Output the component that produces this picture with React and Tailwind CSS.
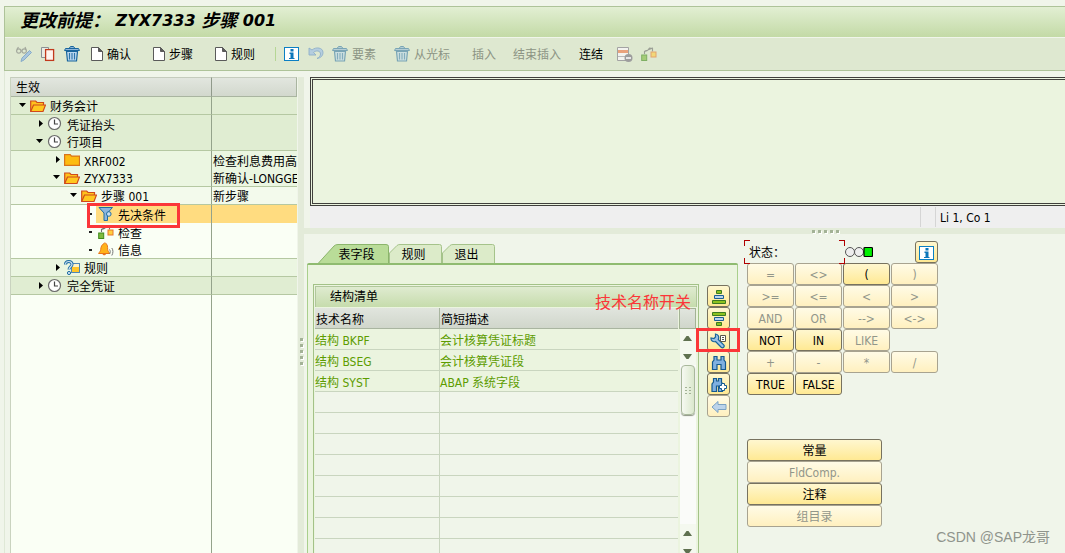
import React from "react";

const Svg = ({ children, className = "w-4 h-4", box = "0 0 16 16" }) => (
  <svg viewBox={box} className={`shrink-0 ${className}`} fill="none" aria-hidden="true">
    {children}
  </svg>
);

const GlassesPencil = () => (
  <Svg>
    <circle cx="2.800" cy="5" r="2.200" stroke="#a3a89d" strokeWidth="1.200" />
    <circle cx="8.200" cy="5" r="2.200" stroke="#a3a89d" strokeWidth="1.200" />
    <path d="M1 3l1.500-2M5 5h1M10 3.500L9 1" stroke="#a3a89d" strokeWidth="1.200" />
    <path d="M13.500 4.500l2 2-7.500 7.500-3 1.500 1-3.500z" fill="#a9c6de" stroke="#86abc8" />
  </Svg>
);
const Copy = () => (
  <Svg>
    <path d="M5 11.500H1.500v-10h7v2" stroke="#8b9094" fill="#e9ece4" />
    <rect x="5.600" y="3.600" width="8" height="10.800" fill="#fff4ee" stroke="#c2391c" strokeWidth="1.300" />
  </Svg>
);
const Trash = ({ dim }) => (
  <Svg>
    <g opacity={dim ? 0.5 : 1}>
      <path d="M5 2.500l1.500-2h3l1.500 2" fill="#8fb6dc" stroke="#19659c" />
      <path d="M.5 4.500l1-2h13l1 2z" fill="#8fb6dc" stroke="#19659c" />
      <path d="M2.500 5.500h11l-1 9.500h-9z" fill="#b9d6ee" stroke="#19659c" strokeWidth="1.200" />
      <path d="M5.500 7v6.500M8 7v6.500M10.500 7v6.500" stroke="#2a73ab" strokeWidth="1.100" />
    </g>
  </Svg>
);
const Doc = () => (
  <Svg className="w-3 h-4" box="0 0 12 16">
    <path d="M.5 1.500h7l4 4v9h-11z" fill="#fff" stroke="#5a5a5a" />
    <path d="M7.500 1.500v4h4z" fill="#5a5a5a" stroke="#5a5a5a" />
  </Svg>
);
const Info = () => (
  <Svg>
    <rect x=".5" y="1.500" width="14" height="13" fill="#fff" stroke="#0b7fc4" />
    <path d="M6.500 3h3v2.500h-3zM5.500 6.500h4V12h1v1H5v-1h1.500V8h-1z" fill="#0b76ba" />
  </Svg>
);
const Undo = () => (
  <Svg>
    <path d="M1 2v7h7L5.500 6.500C8 4 12.500 4.500 12.500 8c0 2-1.500 3.300-3.500 4.500 3.500-.5 6-2.500 6-6 0-5-7-6-11-2.500z" fill="#b4cddf" stroke="#8fb0c8" strokeWidth=".9" />
  </Svg>
);
const ListMinus = () => (
  <Svg className="w-[17px] h-4" box="0 0 17 16">
    <path d="M1.500 1.500h11v13h-11z" fill="#f3f3ef" stroke="#a3a3a3" />
    <path d="M2 4h10v3H2z" fill="#e9a27c" />
    <path d="M2 10.500h10" stroke="#b9b9b9" />
    <circle cx="12.500" cy="12" r="4" fill="#9d9d9d" />
    <path d="M10 12h5" stroke="#fff" strokeWidth="1.500" />
  </Svg>
);
const Flow = ({ dim }) => (
  <Svg>
    <g opacity={dim ? 0.6 : 1}>
      <path d="M3.500 8V5.500l3-1M6.500 4.500l2-2.500 3 .5v3M4 5l8-3" stroke="#6f6f6f" strokeWidth="1.100" />
      <rect x=".7" y="9" width="5" height="5.500" fill="#7fbb3d" stroke="#3f8a1c" />
      <rect x="10" y="6" width="5" height="5" fill="#ffcf3f" stroke="#e8772a" />
    </g>
  </Svg>
);
const FolderOpen = () => (
  <Svg>
    <path d="M.7 13.300V3h5l1.300 1.500h6.500V7" fill="#ffc21c" stroke="#cf4a1c" strokeWidth="1.200" />
    <path d="M.7 13.500L3.500 7h12l-2.500 6.500z" fill="#ffc81f" stroke="#cf4a1c" strokeWidth="1.200" />
  </Svg>
);
const Folder = () => (
  <Svg>
    <path d="M.6 13.400V2.600h5.600l1.300 1.500h8v9.300z" fill="#fdbb10" stroke="#d9731a" strokeWidth="1.200" />
  </Svg>
);
const Clock = () => (
  <Svg>
    <circle cx="7.500" cy="7.500" r="6" fill="#fff" stroke="#6b6b6b" strokeWidth="1.200" />
    <path d="M7.500 3.500v4.500h3.500" stroke="#444" strokeWidth="1.200" />
  </Svg>
);
const Filter = () => (
  <Svg>
    <path d="M1 1.500h13.500L9.500 7v7.500H6V7z" fill="#8db5dd" stroke="#1f6ea3" />
    <circle cx="10.800" cy="8" r="2.300" fill="#c9def2" stroke="#1f6ea3" />
  </Svg>
);
const Bell = () => (
  <Svg>
    <path d="M6 1.500c.4-.7 1.600-.7 1.900 0C9.700 2.500 9.500 4.500 9.700 7.500c.1 1.700 1.300 2.400 2 4H.6c.8-1.600 2-2.300 2.100-4 .2-3 1.300-5 3.300-6z" fill="#ffb21a" stroke="#e8751c" />
    <path d="M4.500 12c.5 1.700 3 1.700 3.500 0z" fill="#e8751c" />
    <path d="M11.500 7.500c1 1.300 1 3 0 4.500M13.800 6c1.500 2 1.500 5 0 7.500" stroke="#777" />
  </Svg>
);
const Rule = () => (
  <Svg>
    <rect x="7.500" y="3.500" width="8" height="9" fill="#ffc62b" stroke="#4f87b5" />
    <path d="M8 4h7v3H8z" fill="#fff3c4" />
    <path d="M1.500 4.500c0-4 6.500-4 6.500 0 0 2.200-3 2.300-3 5" stroke="#1f6ea3" strokeWidth="3" />
    <path d="M1.500 4.500c0-4 6.500-4 6.500 0 0 2.200-3 2.300-3 5" stroke="#cfe2f3" strokeWidth="1.200" />
    <circle cx="5" cy="13" r="1.600" fill="#cfe2f3" stroke="#1f6ea3" />
  </Svg>
);

const SortAsc = () => (
  <Svg>
    <path d="M5.500 1.500h5v3h-5z" fill="#8cc21f" stroke="#3b7a22" />
    <path d="M3.500 6.500h9v3h-9z" fill="#b8d4ef" stroke="#1b5c94" />
    <path d="M1.500 11.500h13v3h-13z" fill="#8cc21f" stroke="#3b7a22" />
  </Svg>
);
const SortDesc = () => (
  <Svg>
    <path d="M1.500 1.500h13v3h-13z" fill="#8cc21f" stroke="#3b7a22" />
    <path d="M3.500 6.500h9v3h-9z" fill="#b8d4ef" stroke="#1b5c94" />
    <path d="M5.500 11.500h5v3h-5z" fill="#8cc21f" stroke="#3b7a22" />
  </Svg>
);
const Wrench = () => (
  <Svg className="h-4 w-[17px]" box="0 0 17 16">
    <path
      d="M5.500 1v3L4 5.500 1 5c-.3 2.800 2 4.300 4.500 3.500l5.700 5.700c1.700 1.500 4-.6 2.500-2.400L8.300 6.500C9.500 3.500 8 1.300 5.500 1z"
      fill="#9cc2e5"
      stroke="#19659c"
      strokeWidth="1.200"
    />
    <path d="M10.500 2.500h5v6h-5z" fill="#fff" stroke="#5a564a" />
    <path d="M12 4.500h2M12 6.500h2" stroke="#5a564a" />
  </Svg>
);
const Binoculars = ({ plus }) => (
  <Svg>
    <path
      d={
        plus
          ? "M1 14.500V7l1.500-2V1.500h3V4h2V1.500h3V5l1 2v7.500h-4V9h-2v5.500z"
          : "M1.500 14.500V7L3 5V1.500h3V5h4V1.500h3V5l1.500 2v7.500h-4.500V9.500h-4v5z"
      }
      fill="#7fb0e0"
      stroke="#14598f"
      strokeWidth="1.200"
    />
    {plus && <path d="M10.500 6.500h3v2h2v3h-2v2h-3v-2h-2v-3h2z" fill="#fff" stroke="#14598f" />}
  </Svg>
);
const ArrowLeft = () => (
  <Svg>
    <path d="M1 8l6-5.500v3h8v5H7v3z" fill="#bcd3ea" stroke="#7ba2c4" />
  </Svg>
);

const tools = [
  { label: "显示/更改", icon: <GlassesPencil />, hide: true, off: true },
  { label: "复制", icon: <Copy />, hide: true },
  { label: "删除", icon: <Trash />, hide: true, cls: "mr-[3px]" },
  { label: "确认", icon: <Doc />, cls: "w-[54px]" },
  { label: "步骤", icon: <Doc />, cls: "w-[54px]" },
  { label: "规则", icon: <Doc />, cls: "w-[52px]" },
  { sep: true },
  { label: "信息", icon: <Info />, hide: true },
  { label: "撤销", icon: <Undo />, hide: true, off: true },
  { label: "要素", icon: <Trash dim />, off: true, cls: "w-[54px]" },
  { label: "从光标", icon: <Trash dim />, off: true, cls: "w-[70px]" },
  { label: "插入", off: true, cls: "w-[33px]" },
  { label: "结束插入", off: true, cls: "w-[58px]" },
  { label: "连结", cls: "w-[29px]" },
  { label: "删除行", icon: <ListMinus />, hide: true, off: true },
  { label: "结构", icon: <Flow dim />, hide: true, off: true },
];

const indent = ["pl-[7px]", "pl-[24px]", "pl-[41px]", "pl-[58px]", "pl-[75px]"];

const tree = [
  { lv: 0, open: true, icon: <FolderOpen />, text: "财务会计", bg: "bg-[#e0edd2]", line: true },
  { lv: 1, open: false, icon: <Clock />, text: "凭证抬头", bg: "bg-[#e0edd2]" },
  { lv: 1, open: true, icon: <Clock />, text: "行项目", bg: "bg-[#e0edd2]", line: true },
  { lv: 2, open: false, icon: <Folder />, text: "XRF002", note: "检查利息费用高", bg: "bg-[#ebf6e1]" },
  { lv: 2, open: true, icon: <FolderOpen />, text: "ZYX7333", note: "新确认-LONGGE", bg: "bg-[#ebf6e1]", line: true },
  { lv: 3, open: true, icon: <FolderOpen />, text: "步骤 001", note: "新步骤", bg: "bg-[#f3faec]", line: true },
  { lv: 4, icon: <Filter />, text: "先决条件", bg: "bg-[#fafff5]", sel: true },
  { lv: 4, icon: <Flow />, text: "检查", bg: "bg-[#fafff5]" },
  { lv: 4, icon: <Bell />, text: "信息", bg: "bg-[#fafff5]", line: true },
  { lv: 2, open: false, icon: <Rule />, text: "规则", bg: "bg-[#ebf6e1]", line: true },
  { lv: 1, open: false, icon: <Clock />, text: "完全凭证", bg: "bg-[#e0edd2]", line: true },
];

const Twisty = ({ open }) => (
  <Svg className="w-3 h-3" box="0 0 12 12">
    {open === undefined && <path d="M3 5h3v2H3z" fill="#222" />}
    {open === true && <path d="M1 3h7L4.500 7z" fill="#000" />}
    {open === false && <path d="M4 2v7l4-3.500z" fill="#000" />}
  </Svg>
);

function Tree() {
  return (
    <section className="flex w-[287px] shrink-0 flex-col border-l border-[#c9d3bf] bg-[#fafff5]">
      <table className="w-full table-fixed border-separate border-spacing-0 text-left">
        <colgroup>
          <col className="w-[201px]" />
          <col />
        </colgroup>
        <thead>
          <tr className="h-5">
            <th className="border-y border-r border-t-[#c5ccbd] border-r-[#909a8b] border-b-[#a9b5a0] bg-gradient-to-b from-[#e2e6df] to-[#d2d8cd] p-0 pl-[5px] pt-0.5 font-normal leading-4">
              生效
            </th>
            <th className="border-y border-r border-t-[#c5ccbd] border-r-[#a9b5a0] border-b-[#a9b5a0] bg-gradient-to-b from-[#e2e6df] to-[#d2d8cd] p-0" />
          </tr>
        </thead>
        <tbody>
          {tree.map((r) => (
            <tr key={r.text} className={r.bg}>
              <td className={`relative border-r border-[#94a38b] p-0 ${r.line ? "border-b border-b-[#b5c8a2]" : ""}`}>
                <div className={`flex items-center ${r.line ? "h-[17px]" : "h-[18px]"} ${indent[r.lv]}`}>
                  <Twisty open={r.open} />
                  <div className={`-ml-0.5 flex h-full flex-1 items-center gap-1 pl-0.5 ${r.sel ? "bg-[#ffdc80]" : ""}`}>
                    {r.icon}
                    <span className="whitespace-nowrap pt-[3px] leading-[14px]">{r.text}</span>
                  </div>
                </div>
                {r.sel && (
                  <div className="absolute -top-0.5 left-[76px] z-10 h-[25px] w-[93px] border-[3px] border-[#fb3639]" />
                )}
              </td>
              <td
                className={`overflow-hidden whitespace-nowrap p-0 pl-px ${r.sel ? "bg-[#ffdc80]" : ""} ${
                  r.line ? "border-b border-b-[#b5c8a2]" : ""
                }`}
              >
                <div className="pt-[3px] leading-[14px]">{r.note}</div>
              </td>
            </tr>
          ))}
        </tbody>
      </table>
      <div className="w-[201px] flex-1 border-r border-[#94a38b]" />
    </section>
  );
}

const Grip = ({ vertical }) => (
  <div className={`flex gap-[3px] ${vertical ? "flex-col" : ""}`}>
    {[0, 1, 2, 3, 4].map((i) => (
      <i key={i} className="h-[3px] w-[3px] bg-[#a3b296] shadow-[1px_1px_0_#fff]" />
    ))}
  </div>
);

const Tab = ({ active, wide, children }) => (
  <button
    role="tab"
    aria-selected={!!active}
    className={`relative h-[19px] text-center ${wide ? "w-[71px] pl-1.5" : "w-[53px] pr-1"}`}
  >
    <svg
      className="absolute inset-0 h-full w-full"
      viewBox={wide ? "0 0 71 19" : "0 0 53 19"}
      fill={active ? "#b9dc98" : "#dcebc9"}
      stroke={active ? "#8bb56b" : "#a5c38a"}
      aria-hidden="true"
    >
      {wide ? <path d="M.5 19L16 2q1.500-1.500 4-1.500h48q2.500 0 2.500 2V19" /> : <path d="M.5 19V9L8 1.500Q9 .5 11 .5h39.500q2 0 2 2V19" />}
    </svg>
    <span className="relative block leading-[22px]">{children}</span>
  </button>
);

const fields = [
  ["结构 BKPF", "会计核算凭证标题"],
  ["结构 BSEG", "会计核算凭证段"],
  ["结构 SYST", "ABAP 系统字段"],
  ...Array.from({ length: 8 }, () => ["", ""]),
];

const ScrollArrow = ({ up }) => (
  <button aria-label={up ? "向上" : "向下"} className="flex h-[18px] w-4 shrink-0 items-center justify-center bg-[#f4f8ef]">
    <Svg className="h-[5px] w-[9px]" box="0 0 9 5">
      <path d={up ? "M0 5h9L5.500 0h-2z" : "M0 0h9L5.500 5h-2z"} fill="#5f7050" />
    </Svg>
  </button>
);

function FieldTable() {
  return (
    <div className="min-w-0 flex-1 border-l border-t border-r border-[#a3c287] pl-px pt-px pr-px">
      <div className="relative mb-px flex h-[21px] items-center border border-b-0 border-[#b1c79c] bg-gradient-to-b from-[#dfebd0] to-[#c6dcac] pl-3.5">
        结构清单
        <span className="absolute right-[5px] top-1.5 z-10 text-base leading-5 text-[#fb3639]">技术名称开关</span>
      </div>
      <div className="flex">
        <table className="min-w-0 flex-1 table-fixed border-separate border-spacing-0 text-left">
          <colgroup>
            <col className="w-[125px]" />
            <col />
          </colgroup>
          <thead>
            <tr>
              {["技术名称", "简短描述"].map((h, i) => (
                <th
                  key={h}
                  className={`h-[21px] border-b border-[#a9b5a0] bg-gradient-to-b from-[#e1e5de] to-[#d0d6cb] p-0 pl-px pt-1 font-normal leading-4 ${
                    i === 0 ? "border-r" : ""
                  }`}
                >
                  {h}
                </th>
              ))}
            </tr>
          </thead>
          <tbody className="text-[#5d9c00]">
            {fields.map((f, r) => (
              <tr key={r} className={f[0] ? "bg-[#ebf4df]" : "bg-[#f0f5ea]"}>
                <td className="h-[21px] border-b border-r border-[#c9d5bf] p-0 pt-1 leading-4">{f[0]}</td>
                <td className="h-[21px] border-b border-[#c9d5bf] p-0 pt-1 leading-4">{f[1]}</td>
              </tr>
            ))}
          </tbody>
        </table>
        <div className="flex w-[19px] flex-col items-center">
          <div className="h-[21px] w-[17px] shrink-0 border border-[#a3b394] bg-gradient-to-b from-[#e1e5de] to-[#d0d6cb]" />
          <ScrollArrow up />
          <ScrollArrow />
          <div className="flex w-4 flex-1 flex-col bg-[#fafbf9]">
            <div className="mx-px flex h-[50px] items-center justify-center gap-0.5 rounded-sm border border-[#a9b89c] bg-gradient-to-r from-[#f6f9f2] to-[#dbe8cd] shadow-[0_1px_1px_#8c9484]">
              {[0, 1].map((c) => (
                <span key={c} className="flex flex-col gap-0.5">
                  {[0, 1, 2].map((i) => (
                    <i key={i} className="h-px w-0.5 bg-[#a3b296]" />
                  ))}
                </span>
              ))}
            </div>
          </div>
          <ScrollArrow up />
          <ScrollArrow />
        </div>
      </div>
    </div>
  );
}

const Key = ({ off, className = "", children, ...rest }) => (
  <button
    disabled={off}
    className={`flex h-[22px] items-center justify-center rounded-[3px] border pt-px ${
      off
        ? "border-[#a8a390] bg-gradient-to-b from-[#fffbe6] to-[#fff0bf] text-[#92968a]"
        : "border-[#77725f] bg-gradient-to-b from-[#fff7cf] to-[#ffe993] text-black"
    } ${className}`}
    {...rest}
  >
    {children}
  </button>
);

const sideTools = [
  ["升序排序", <SortAsc />],
  ["降序排序", <SortDesc />],
  ["技术名称开关", <Wrench />],
  ["查找", <Binoculars />],
  ["继续查找", <Binoculars plus />],
  ["返回", <ArrowLeft />],
];

const keys = [
  ["=", 1], ["<>", 1], ["(", 0], [")", 1],
  [">=", 1], ["<=", 1], ["<", 1], [">", 1],
  ["AND", 1], ["OR", 1], ["-->", 1], ["<->", 1],
  ["NOT", 0], ["IN", 0], ["LIKE", 1], null,
  ["+", 1], ["-", 1], ["*", 1], ["/", 1],
  ["TRUE", 0], ["FALSE", 0],
];

function Keypad() {
  return (
    <section className="flex flex-col gap-11 pl-[9px] pt-[7px]">
      <div className="grid grid-cols-[repeat(4,47px)] gap-x-px">
        <div className="relative col-span-2 flex h-[22px] items-center pl-0.5 pt-0.5">
          状态：
          <i className="absolute -left-[3px] -top-px h-1.5 w-1.5 border-l border-t border-[#b00000]" />
          <i className="absolute -right-[3px] -top-px h-1.5 w-1.5 border-r border-t border-[#b00000]" />
          <i className="absolute -bottom-px -left-[3px] h-1.5 w-1.5 border-b border-l border-[#b00000]" />
          <i className="absolute -bottom-px -right-[3px] h-1.5 w-1.5 border-b border-r border-[#b00000]" />
        </div>
        <div className="flex items-center pl-0.5">
          <Svg className="w-7 h-3" box="0 0 28 12">
            <circle cx="5" cy="6" r="4.500" fill="#eee" stroke="#555" />
            <circle cx="14" cy="6" r="4.500" fill="#eee" stroke="#555" />
            <rect x="19" y="1.500" width="8.500" height="9" rx="1" fill="#00f000" stroke="#000" strokeWidth="1.200" />
          </Svg>
        </div>
        <Key className="w-[23px] justify-self-end" aria-label="信息">
          <Info />
        </Key>
        {keys.map((k, i) =>
          k ? (
            <Key key={i} off={!!k[1]}>
              {k[0]}
            </Key>
          ) : (
            <span key={i} />
          )
        )}
      </div>
      <div className="flex w-[135px] flex-col">
        <Key>常量</Key>
        <Key off>FldComp.</Key>
        <Key>注释</Key>
        <Key off>组目录</Key>
      </div>
    </section>
  );
}

export default function App() {
  return (
    <div className="relative flex h-screen flex-col overflow-hidden bg-[#f0f5ea] pl-1 font-['DejaVu_Sans_Condensed','Noto_Sans','Noto_Sans_CJK_SC',sans-serif] text-xs text-black">
      <header className="mt-1.5 shrink-0 border-l border-t border-[#aec399]">
        <h1 className="flex h-[31px] items-center whitespace-pre border-b border-[#f0f5ea] bg-gradient-to-b from-[#e2efd3] to-[#c3daa6] pb-0.5 pl-[15px] font-['DejaVu_Sans','Noto_Sans_CJK_SC',sans-serif] text-base font-bold italic leading-6">
          <span className="text-lg leading-6">更改前提：</span>
          {" ZYX7333 "}
          <span className="text-lg leading-6">步骤</span>
          {" 001"}
        </h1>
        <nav className="flex h-[33px] items-center gap-2 border-b border-[#aec399] bg-[#dee8d0] pl-[11px]">
          {tools.map((t, i) =>
            t.sep ? (
              <i key={i} className="h-3.5 w-px border-l border-[#b5d694]" />
            ) : (
              <button
                key={i}
                disabled={t.off}
                aria-label={t.label}
                className={`flex h-6 shrink-0 items-center gap-1 whitespace-nowrap disabled:text-[#8c9484] ${t.cls || ""}`}
              >
                {t.icon}
                {!t.hide && <span className="pt-0.5">{t.label}</span>}
              </button>
            )
          )}
        </nav>
      </header>
      <main className="flex min-h-0 flex-1 border-l border-[#dfe8d6] pl-[5px] pt-1.5">
        <Tree />
        <div className="ml-px flex w-1.5 shrink-0 flex-col items-center justify-center bg-[#e3ebd9] pt-[72px]">
          <Grip vertical />
        </div>
        <div className="flex min-w-0 flex-1 flex-col">
          <div className="ml-1.5 shrink-0">
            <textarea
              aria-label="条件编辑器"
              className="block h-[129px] w-full resize-none border-[3px] border-r-0 border-double border-[#40403c] bg-[#ebf4df] outline-none"
            />
            <div className="flex h-[22px] items-center justify-end bg-[#efefef]">
              <i className="h-5 w-4 border-x border-[#d5d5d5]" />
              <span className="w-[129px] pl-1 pt-0.5">Li 1, Co 1</span>
            </div>
          </div>
          <div className="flex h-1.5 shrink-0 items-center bg-[#e3ebd9]">
            <div className="mx-auto pl-[282px]">
              <Grip />
            </div>
          </div>
          <div className="flex min-h-0 flex-1">
            <section className="ml-[3px] mt-2.5 flex w-[431px] shrink-0 flex-col">
              <div role="tablist" className="flex pl-[11px]">
                <Tab active wide>表字段</Tab>
                <Tab>规则</Tab>
                <Tab>退出</Tab>
              </div>
              <div className="h-[3px] rounded-t-sm border-y border-[#8fbb70] bg-[#b9dc98]" />
              <div className="flex flex-1 items-start gap-2 border-x border-[#a9cf8c] bg-[#ebf4df] pl-[5px] pr-[7px] pt-[19px]">
                <FieldTable />
                <div className="flex w-[23px] flex-col pt-px">
                  {sideTools.map(([label, icon], i) => (
                    <div key={label} className="relative">
                      <Key aria-label={label} off={i === 5} className="w-full">
                        {icon}
                      </Key>
                      {i === 2 && (
                        <div className="pointer-events-none absolute -left-[11px] -top-px z-10 h-6 w-11 border-[3px] border-[#fb3639]" />
                      )}
                    </div>
                  ))}
                </div>
              </div>
            </section>
            <Keypad />
          </div>
        </div>
      </main>
      <p className="absolute bottom-1.5 right-[15px] font-['Liberation_Sans','Noto_Sans_CJK_SC',sans-serif] text-sm leading-5 text-[#8f948c]">
        CSDN @SAP龙哥
      </p>
    </div>
  );
}
